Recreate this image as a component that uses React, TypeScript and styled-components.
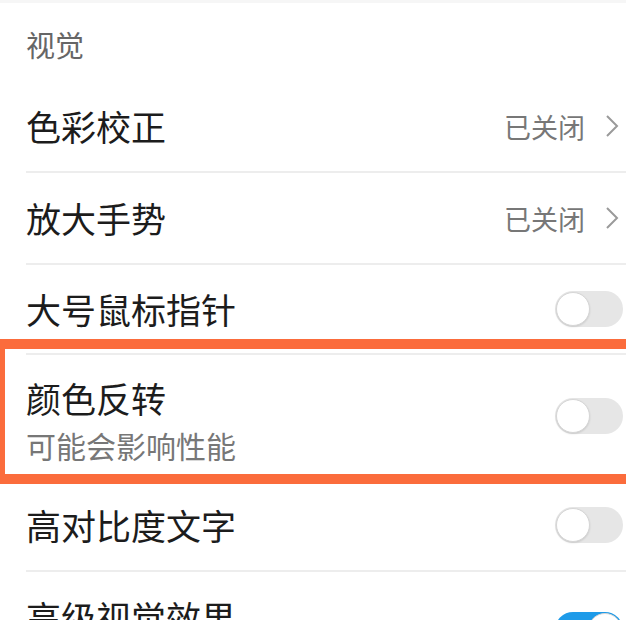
import styled, { createGlobalStyle } from "styled-components";

const GlobalStyle = createGlobalStyle`
  html, body {
    margin: 0;
    padding: 0;
    background: #ffffff;
    overflow: hidden;
  }
  body {
    font-family: "Noto Sans CJK SC", "Noto Sans", sans-serif;
  }
`;

type Item = {
  title: string;
  sub?: string;
  value?: string;
  toggle?: boolean;
  on?: boolean;
  height: number;
  shift?: number;
};

const items: Item[] = [
  { title: "色彩校正", value: "已关闭", height: 92 },
  { title: "放大手势", value: "已关闭", height: 92 },
  { title: "大号鼠标指针", toggle: true, height: 90 },
  { title: "颜色反转", sub: "可能会影响性能", toggle: true, height: 124, shift: 9 },
  { title: "高对比度文字", toggle: true, height: 93 },
  { title: "高级视觉效果", toggle: true, on: true, height: 118, shift: -26 },
];

const Chevron = () => (
  <ChevronSvg viewBox="0 0 14 24" width={14} height={24}>
    <path d="M2 2 L12 12 L2 22" fill="none" stroke="#9a9a9a" strokeWidth={2} />
  </ChevronSvg>
);

const SettingRow = ({ item }: { item: Item }) => {
  return (
    <Row $height={item.height}>
      <TextBlock $shift={item.shift ?? 0}>
        <Title>{item.title}</Title>
        {item.sub && <Sub>{item.sub}</Sub>}
      </TextBlock>
      {item.value && (
        <Right>
          <Value>{item.value}</Value>
          <Chevron />
        </Right>
      )}
      {item.toggle && (
        <Switch $on={!!item.on}>
          <Knob $on={!!item.on} />
        </Switch>
      )}
    </Row>
  );
};

export default function App() {
  return (
    <Page>
      <GlobalStyle />
      <TopStrip />
      <Header>视觉</Header>
      <List>
        {items.map((item) => (
          <SettingRow key={item.title} item={item} />
        ))}
      </List>
      <Highlight />
    </Page>
  );
}

const Page = styled.div`
  position: relative;
  width: 626px;
  height: 620px;
  overflow: hidden;
  background: #ffffff;
`;

const TopStrip = styled.div`
  height: 3px;
  background: #f6f6f6;
`;

const Header = styled.div`
  height: 78px;
  box-sizing: border-box;
  padding: 4px 0 0 26px;
  display: flex;
  align-items: center;
  font-size: 29px;
  color: #666666;
`;

const List = styled.div`
  padding-left: 26px;
`;

const Row = styled.div<{ $height: number }>`
  height: ${(p) => p.$height}px;
  box-sizing: border-box;
  padding-right: 3px;
  display: flex;
  align-items: center;
  justify-content: space-between;
  border-bottom: 2px solid #ededed;
`;

const TextBlock = styled.div<{ $shift: number }>`
  display: flex;
  flex-direction: column;
  margin-top: ${(p) => p.$shift}px;
`;

const Title = styled.div`
  font-size: 35px;
  line-height: 40px;
  color: #1c1c1c;
`;

const Sub = styled.div`
  margin-top: 9px;
  font-size: 30px;
  line-height: 36px;
  color: #777777;
`;

const Right = styled.div`
  display: flex;
  align-items: center;
  gap: 20px;
  padding-right: 4px;
`;

const Value = styled.span`
  font-size: 27px;
  color: #777777;
`;

const ChevronSvg = styled.svg`
  display: block;
`;

const Switch = styled.div<{ $on: boolean }>`
  position: relative;
  width: 68px;
  height: 36px;
  border-radius: 18px;
  background: ${(p) => (p.$on ? "#1e9be9" : "#e6e6e6")};
`;

const Knob = styled.div<{ $on: boolean }>`
  position: absolute;
  top: 1px;
  left: ${(p) => (p.$on ? "33px" : "1px")};
  width: 34px;
  height: 34px;
  box-sizing: border-box;
  border-radius: 50%;
  background: #ffffff;
  border: 1px solid #d6d6d6;
  box-shadow: 0 1px 2px rgba(0, 0, 0, 0.12);
`;

const Highlight = styled.div`
  position: absolute;
  top: 339px;
  left: 0;
  width: 660px;
  height: 145px;
  box-sizing: border-box;
  border: 10px solid #fb6c3c;
  border-left-width: 5px;
  pointer-events: none;
`;
